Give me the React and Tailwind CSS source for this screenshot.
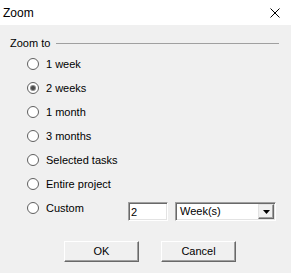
import { useState } from "react";

const OPTIONS = [
  "1 week",
  "2 weeks",
  "1 month",
  "3 months",
  "Selected tasks",
  "Entire project",
];

function Radio({ checked }) {
  return (
    <span className="flex h-[12px] w-[12px] items-center justify-center rounded-full border border-[#5f5f5f] bg-white">
      {checked && <span className="h-[4px] w-[4px] rounded-full bg-[#4a4a4a] ring-1 ring-[#8a8a8a]" />}
    </span>
  );
}

function RadioRow({ label, checked, onPick }) {
  return (
    <div
      className="flex h-[24px] cursor-default items-center pl-[27px]"
      onClick={onPick}
    >
      <Radio checked={checked} />
      <span className="ml-[7px] text-[11px] text-black">{label}</span>
    </div>
  );
}

export default function App() {
  const [picked, setPicked] = useState("2 weeks");
  const [count, setCount] = useState("2");

  return (
    <div className="flex h-[273px] w-[291px] flex-col bg-[#f0f0f0] font-['Liberation_Sans',Arial,sans-serif] text-black">
      {/* Title bar */}
      <div className="flex h-[25px] items-center justify-between bg-white pl-[3px] pr-[11px]">
        <span className="text-[12px]">Zoom</span>
        <svg width="10" height="10" viewBox="0 0 10 10" className="mt-[1px]">
          <path d="M0.5 0.5 L9.5 9.5 M9.5 0.5 L0.5 9.5" stroke="#000" strokeWidth="1" />
        </svg>
      </div>

      {/* Group box */}
      <div className="flex h-[14px] items-center pl-[10px] pr-[12px] mt-[11px]">
        <span className="text-[11px]">Zoom to</span>
        <div className="ml-[6px] h-[1px] flex-1 bg-[#a0a0a0]" />
      </div>

      <div className="mt-[2px] flex flex-col">
        {OPTIONS.map((o) => (
          <RadioRow
            key={o}
            label={o}
            checked={picked === o}
            onPick={() => setPicked(o)}
          />
        ))}

        {/* Custom row */}
        <div className="flex h-[24px] items-start">
          <div className="w-[128px]">
            <RadioRow
              label="Custom"
              checked={picked === "Custom"}
              onPick={() => setPicked("Custom")}
            />
          </div>
          <input
            value={count}
            onChange={(e) => setCount(e.target.value)}
            className="mt-[6px] h-[19px] w-[40px] border border-t-[#a0a0a0] border-l-[#a0a0a0] border-b-white border-r-white bg-white px-[2px] text-[11px] shadow-[inset_1px_1px_0_#696969,inset_-1px_-1px_0_#e3e3e3] outline-none"
          />
          <div className="ml-[7px] mt-[6px] flex h-[19px] w-[101px] items-center border border-t-[#a0a0a0] border-l-[#a0a0a0] border-b-white border-r-white bg-white shadow-[inset_1px_1px_0_#696969,inset_-1px_-1px_0_#e3e3e3]">
            <span className="flex-1 pl-[4px] text-[11px]">Week(s)</span>
            <div className="mr-[1px] flex h-[15px] w-[16px] items-center justify-center border border-t-[#e3e3e3] border-l-[#e3e3e3] border-b-[#696969] border-r-[#696969] bg-[#f0f0f0] shadow-[inset_-1px_-1px_0_#a0a0a0]">
              <svg width="7" height="4" viewBox="0 0 7 4">
                <path d="M0 0 H7 L3.5 4 Z" fill="#000" />
              </svg>
            </div>
          </div>
        </div>
      </div>

      {/* Buttons */}
      <div className="mt-[21px] flex gap-[22px] pl-[64px]">
        <button className="h-[21px] w-[75px] border border-t-white border-l-white border-b-[#696969] border-r-[#696969] bg-[#f0f0f0] text-[11px] shadow-[inset_-1px_-1px_0_#a0a0a0]">
          OK
        </button>
        <button className="h-[21px] w-[75px] border border-t-white border-l-white border-b-[#696969] border-r-[#696969] bg-[#f0f0f0] text-[11px] shadow-[inset_-1px_-1px_0_#a0a0a0]">
          Cancel
        </button>
      </div>
    </div>
  );
}
